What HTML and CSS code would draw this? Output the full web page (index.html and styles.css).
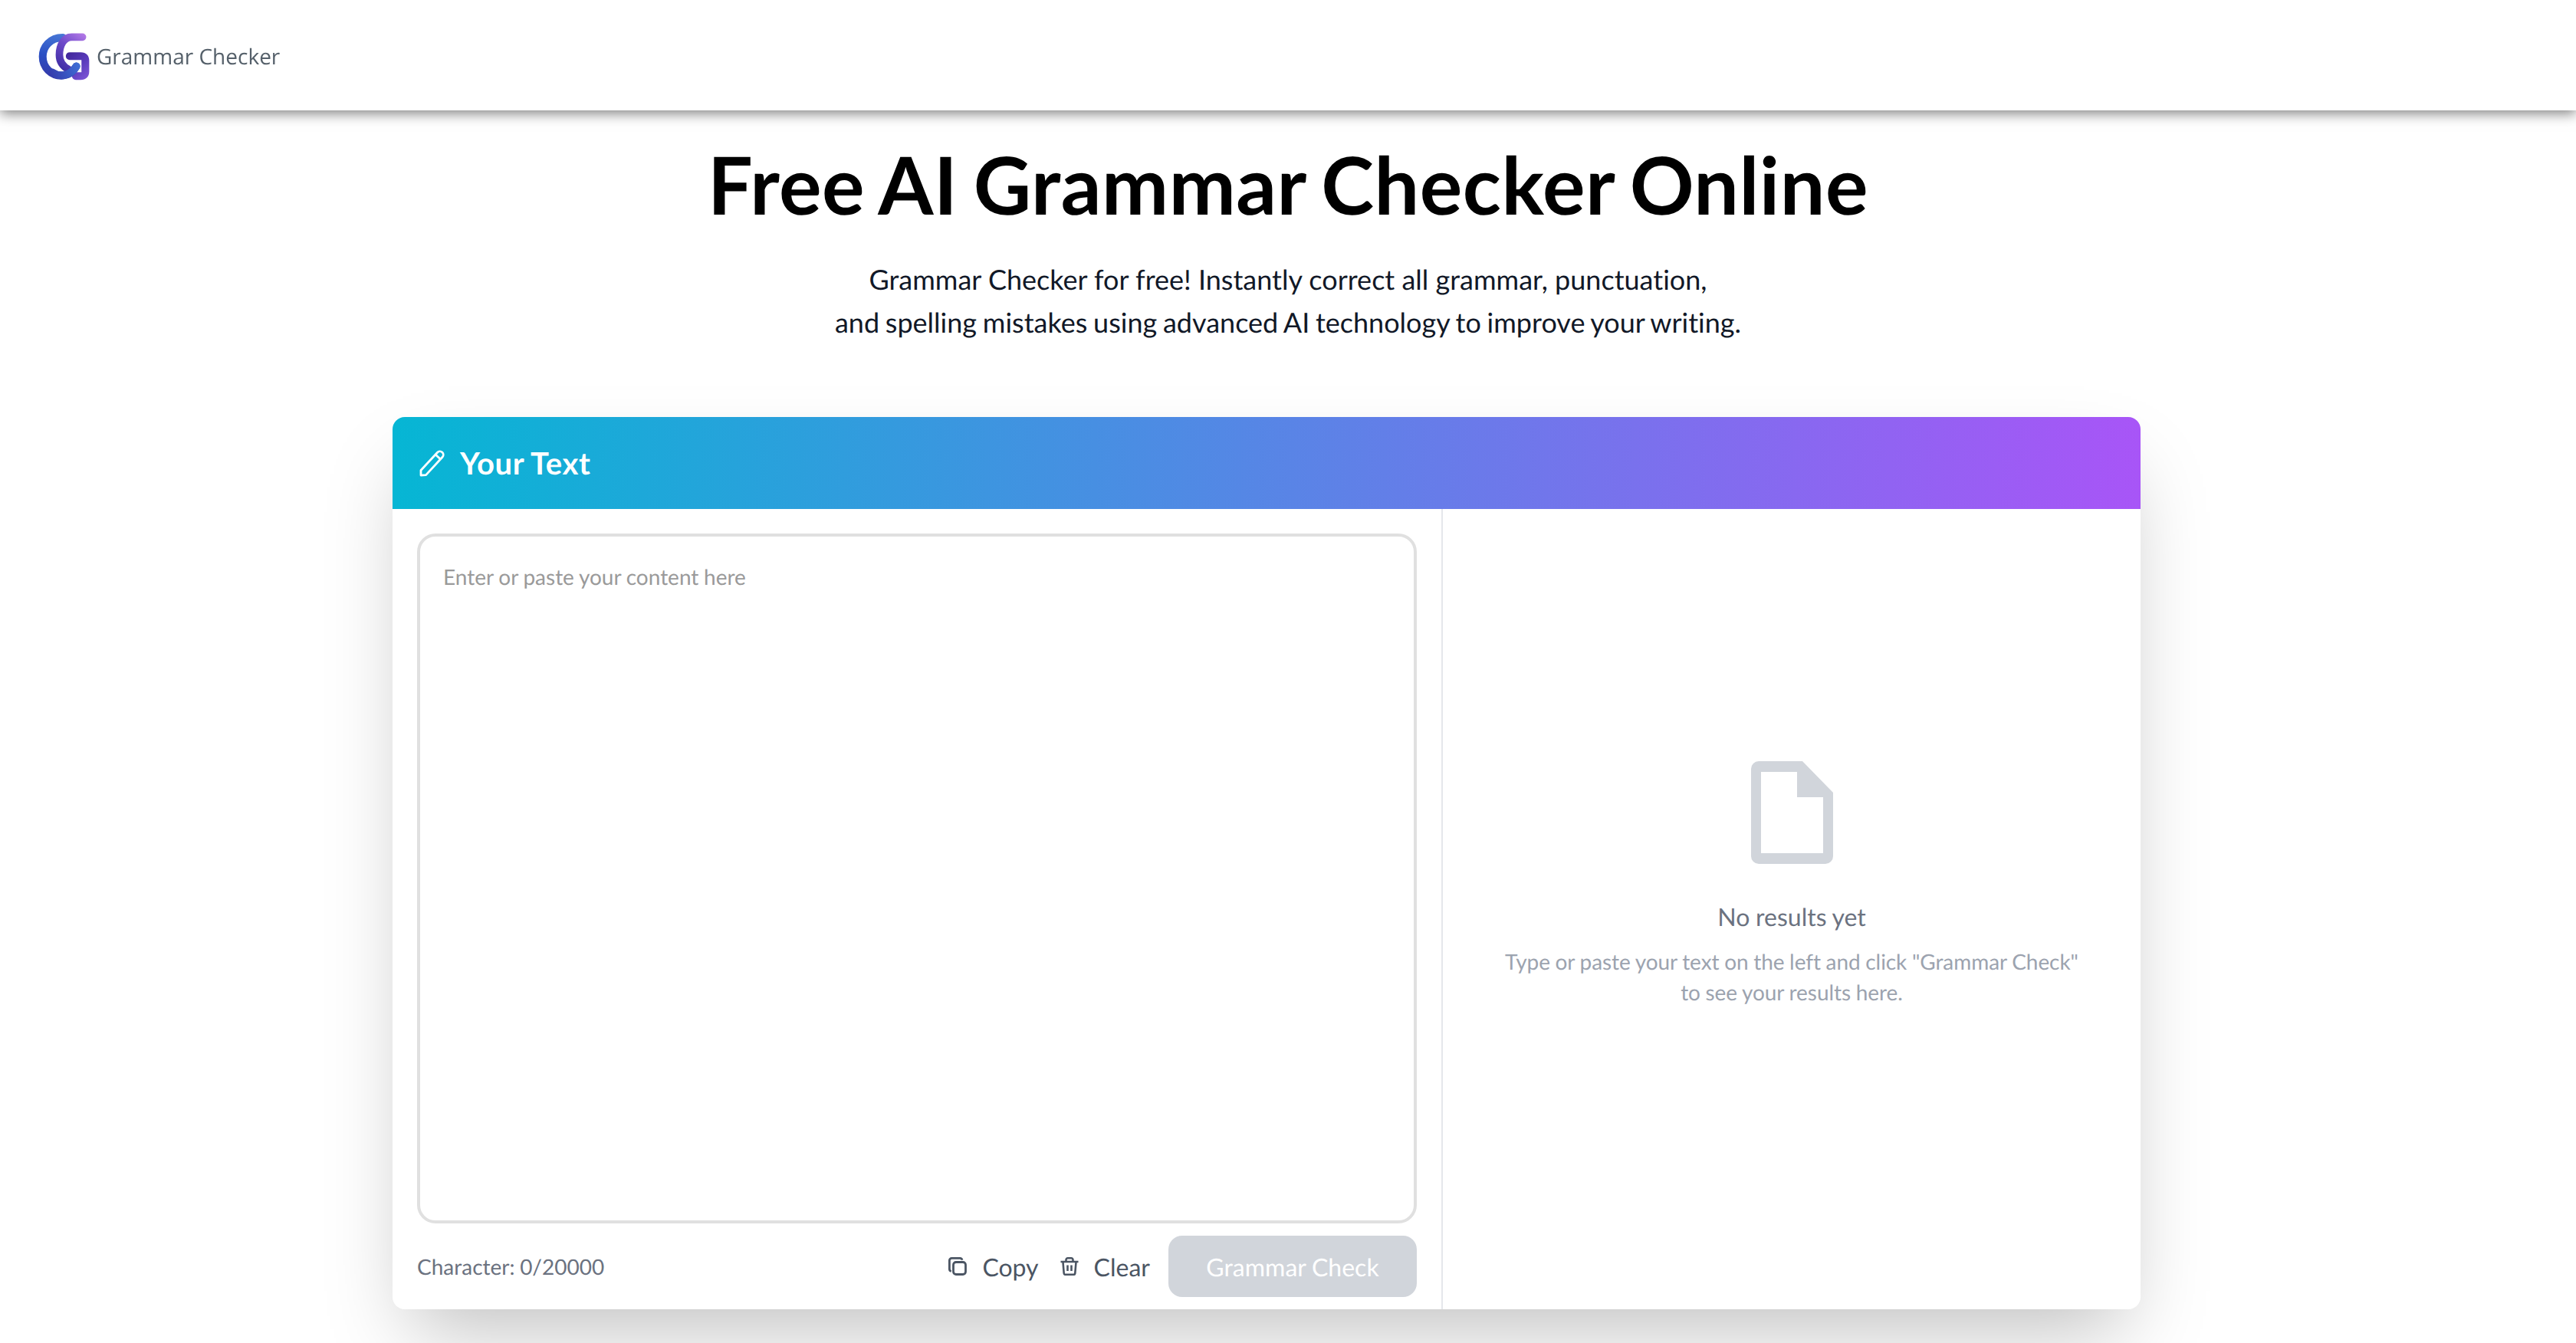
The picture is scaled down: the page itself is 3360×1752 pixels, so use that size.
FILE: index.html
```html
<!DOCTYPE html>
<html lang="en">
<head>
<meta charset="utf-8">
<title>Free AI Grammar Checker Online</title>
<link rel="stylesheet" href="styles.css">
</head>
<body>
<header class="topbar">
  <a class="brand" href="#">
    <svg class="brand-logo" viewBox="150 130 200 185" aria-hidden="true">
      <defs>
        <linearGradient id="lgBlue" gradientUnits="userSpaceOnUse" x1="230" y1="130" x2="200" y2="310"><stop offset="0" stop-color="#4878d6"/><stop offset=".5" stop-color="#2b50c4"/><stop offset="1" stop-color="#3538a8"/></linearGradient>
        <linearGradient id="lgBlueEnd" gradientUnits="userSpaceOnUse" x1="190" y1="300" x2="310" y2="250"><stop offset="0" stop-color="#3338aa"/><stop offset="1" stop-color="#3f6fd6"/></linearGradient>
        <linearGradient id="lgPurple" gradientUnits="userSpaceOnUse" x1="335" y1="140" x2="235" y2="270"><stop offset="0" stop-color="#b278e6"/><stop offset=".45" stop-color="#6f4bcb"/><stop offset="1" stop-color="#3f2da4"/></linearGradient>
        <linearGradient id="lgBar" gradientUnits="userSpaceOnUse" x1="262" y1="215" x2="345" y2="310"><stop offset="0" stop-color="#42289c"/><stop offset=".5" stop-color="#5a3cbc"/><stop offset="1" stop-color="#8058d8"/></linearGradient>
      </defs>
      <path d="M272 220H316Q333 220 333 238V280Q333 298 315 298H296" fill="none" stroke="url(#lgBar)" stroke-width="30" stroke-linecap="round"/>
      <path d="M245 148C195 148 167 185 167 222C167 265 200 296 240 296C265 296 285 282 298 260" fill="none" stroke="url(#lgBlue)" stroke-width="30" stroke-linecap="round"/>
      <path d="M322 146H280C248 146 232 180 232 215C232 240 245 260 268 272" fill="none" stroke="url(#lgPurple)" stroke-width="29" stroke-linecap="round"/>
      <path d="M205 284C230 302 275 300 298 260" fill="none" stroke="url(#lgBlueEnd)" stroke-width="30" stroke-linecap="round"/>
    </svg>
    <span class="brand-name">Grammar Checker</span>
  </a>
</header>

<section class="hero">
  <h1 class="hero-title">Free AI Grammar Checker Online</h1>
  <p class="hero-sub"><span class="hero-line-a">Grammar Checker for free! Instantly correct all grammar, punctuation,</span><br>and spelling mistakes using advanced AI technology to improve your writing.</p>
</section>

<main class="card">
  <div class="card-head">
    <svg class="head-icon" viewBox="0 0 36 36" aria-hidden="true"><path d="M3 27.5 24.500 4.200a4.500 4.500 0 0 1 6.300-.2 4.500 4.500 0 0 1 .3 6.300L9.600 33.600 3 34Z M22 7l6.800 6.200" fill="none" stroke="#fff" stroke-width="2.800" stroke-linejoin="round"/></svg>
    <h2 class="head-title">Your Text</h2>
  </div>
  <div class="card-body">
    <div class="editor">
      <textarea class="editor-input" placeholder="Enter or paste your content here"></textarea>
      <div class="editor-foot">
        <span class="count">Character: 0/20000</span>
        <div class="actions">
          <button class="ghost" type="button">
            <svg class="ghost-icon" viewBox="0 0 24 24" aria-hidden="true"><rect x="6.500" y="6.500" width="16" height="16" rx="3.500" fill="none" stroke="#4b5563" stroke-width="2.800"/><path d="M3.800 18.500A3 3 0 0 1 1.400 15.500V4.500A3 3 0 0 1 4.500 1.400h10.500a3 3 0 0 1 3 2.400" fill="none" stroke="#4b5563" stroke-width="2.800"/></svg>
            Copy
          </button>
          <button class="ghost" type="button">
            <svg class="ghost-icon" viewBox="0 0 24 24" aria-hidden="true"><path d="M.5 6h23M7.500 5.500V3.500A2.200 2.200 0 0 1 9.700 1.300h4.600a2.200 2.200 0 0 1 2.200 2.200v2M3.500 6.500l1.200 14.500a2 2 0 0 0 2 1.800h10.600a2 2 0 0 0 2-1.800l1.200-14.500M9.500 10.500v7.500M14.500 10.500v7.500" fill="none" stroke="#4b5563" stroke-width="2.600"/></svg>
            Clear
          </button>
          <button class="submit" type="button" disabled>Grammar Check</button>
        </div>
      </div>
    </div>
    <aside class="results">
      <svg class="doc-icon" viewBox="0 0 107 134" aria-hidden="true"><path fill="#d1d5db" fill-rule="evenodd" d="M10 0H67L107 41V124a10 10 0 0 1-10 10H10a10 10 0 0 1-10-10V10A10 10 0 0 1 10 0ZM13 14V120H94V47H60V14Z"/></svg>
      <h3 class="results-title">No results yet</h3>
      <p class="results-text">Type or paste your text on the left and click "Grammar Check"<br>to see your results here.</p>
    </aside>
  </div>
</main>
</body>
</html>
```
FILE: styles.css
```css
* { box-sizing: border-box; }
html, body { margin: 0; padding: 0; height: 1752px; overflow: hidden; background: #fff; }
body {
  font-family: Lato, "Liberation Sans", sans-serif;
  color: #111827;
  text-rendering: geometricPrecision;
  font-variant-ligatures: none;
  word-spacing: -.03em;
}
button, textarea {
  font-family: inherit;
  text-rendering: inherit;
  font-variant-ligatures: inherit;
  word-spacing: inherit;
}

.topbar {
  height: 144px;
  display: flex;
  align-items: center;
  padding-left: 50px;
  background: #fff;
  box-shadow: 0 4px 16px rgba(0, 0, 0, .5);
  position: relative;
}
.brand { display: flex; align-items: center; text-decoration: none; margin-top: 3px; }
.brand-logo { width: 67px; height: 62px; display: block; }
.brand-name {
  margin-left: 9px;
  font-family: "Open Sans", "Noto Sans", sans-serif;
  font-size: 28px;
  word-spacing: 0;
  color: #55606a;
  filter: blur(.4px);
}

.hero { text-align: center; }
.hero-title {
  margin: 39px 0 0;
  font-size: 104px;
  line-height: 116px;
  font-weight: 700;
  letter-spacing: .005em;
  word-spacing: -.05em;
  color: #000;
}
.hero-sub {
  margin: 37px 0 0;
  font-size: 36px;
  line-height: 56px;
  word-spacing: -.04em;
  color: #111827;
}
.hero-line-a { word-spacing: 0; }

.card {
  width: 2280px;
  height: 1164px;
  margin: 96px 0 0 512px;
  background: #fff;
  border-radius: 16px;
  box-shadow: 0 50px 100px -24px rgba(0, 0, 0, .25);
  display: flex;
  flex-direction: column;
}
.card-head {
  height: 120px;
  flex: none;
  display: flex;
  align-items: center;
  gap: 18px;
  padding-left: 34px;
  border-radius: 16px 16px 0 0;
  background: linear-gradient(90deg, #06b6d4, #a855f7);
}
.head-icon { width: 36px; height: 36px; display: block; }
.head-title { margin: 0; font-size: 40px; font-weight: 700; letter-spacing: .015em; color: #fff; }

.card-body { flex: 1; display: flex; min-height: 0; }
.editor {
  width: 1368px;
  flex: none;
  padding: 32px 32px 16px;
  display: flex;
  flex-direction: column;
}
.editor-input {
  width: 100%;
  flex: 1;
  padding: 30px 30px;
  resize: none;
  outline: none;
  border: 4px solid #e0e0e0;
  border-radius: 24px;
  font-size: 28px;
  line-height: 44px;
  color: #111827;
  background: #fff;
}
.editor-input::placeholder { color: #9a9a9a; opacity: 1; }
.editor-foot {
  margin-top: 16px;
  display: flex;
  align-items: center;
  justify-content: space-between;
}
.count { font-size: 28px; color: #6b7280; }
.actions { display: flex; align-items: center; gap: 24px; }
.ghost {
  display: flex;
  align-items: center;
  gap: 20px;
  padding: 0;
  border: 0;
  background: none;
  font-size: 32px;
  color: #4b5563;
}
.ghost + .ghost { margin-left: 4px; }
.ghost-icon { width: 24px; height: 24px; display: block; }
.submit {
  width: 324px;
  height: 80px;
  border: 0;
  border-radius: 18px;
  background: #d1d5db;
  font-size: 32px;
  color: #fff;
}

.results {
  flex: 1;
  border-left: 2px solid #e5e7eb;
  display: flex;
  flex-direction: column;
  align-items: center;
  padding-top: 329px;
  text-align: center;
}
.doc-icon { width: 107px; height: 134px; display: block; }
.results-title { margin: 47px 0 0; font-size: 32px; line-height: 44px; font-weight: 400; color: #6b7280; }
.results-text { margin: 16px 0 0; font-size: 28px; line-height: 40px; letter-spacing: -.002em; color: #9ca3af; }
```
